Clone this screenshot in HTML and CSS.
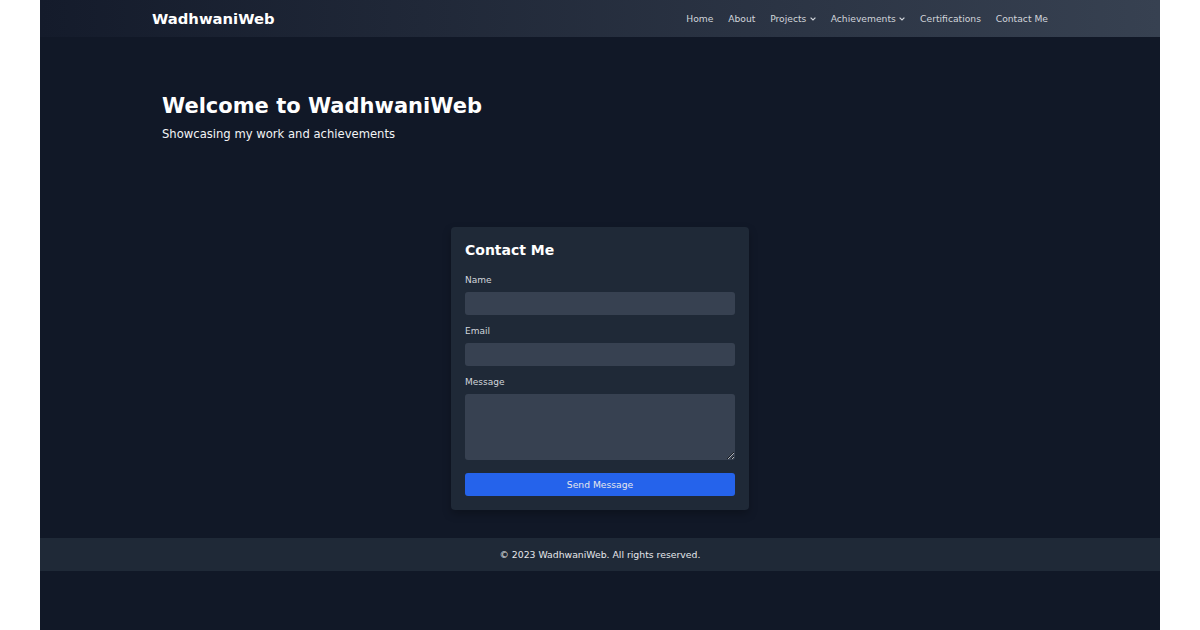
FILE: index.html
```html
<!DOCTYPE html>
<html lang="en">
<head>
<meta charset="utf-8">
<title>WadhwaniWeb</title>
<link rel="stylesheet" href="styles.css">
</head>
<body>
<header class="site-header">
  <div class="header-inner">
    <a class="logo" href="#">WadhwaniWeb</a>
    <nav class="nav">
      <a href="#">Home</a>
      <a href="#">About</a>
      <a href="#" class="dd">Projects<svg class="chev" viewBox="0 0 6 4" width="6" height="4"><path d="M0.6 0.6 L3 3 L5.4 0.6" fill="none" stroke="currentColor" stroke-width="1.2"/></svg></a>
      <a href="#" class="dd">Achievements<svg class="chev" viewBox="0 0 6 4" width="6" height="4"><path d="M0.6 0.6 L3 3 L5.4 0.6" fill="none" stroke="currentColor" stroke-width="1.2"/></svg></a>
      <a href="#">Certifications</a>
      <a href="#">Contact Me</a>
    </nav>
  </div>
</header>
<main class="main">
  <section class="hero">
    <h1>Welcome to WadhwaniWeb</h1>
    <p>Showcasing my work and achievements</p>
  </section>
  <section class="contact">
    <form class="card">
      <h2>Contact Me</h2>
      <div class="field">
        <label>Name</label>
        <input type="text">
      </div>
      <div class="field">
        <label>Email</label>
        <input type="email">
      </div>
      <div class="field field-last">
        <label>Message</label>
        <textarea></textarea>
      </div>
      <button type="button" class="btn">Send Message</button>
    </form>
  </section>
</main>
<footer class="footer">© 2023 WadhwaniWeb. All rights reserved.</footer>
</body>
</html>
```
FILE: styles.css
```css
html {
  background: #ffffff;
}
body {
  margin: 0 auto;
  width: 1120px;
  min-height: 630px;
  background: #111827;
  font-family: "DejaVu Sans", sans-serif;
  color: #ffffff;
}
.site-header {
  height: 37px;
  background: linear-gradient(to right, #141b2b, #374151);
}
.header-inner {
  width: 896px;
  height: 100%;
  margin: 0 auto;
  display: flex;
  align-items: center;
  justify-content: space-between;
}
.logo {
  color: #ffffff;
  text-decoration: none;
  font-weight: bold;
  font-size: 14.8px;
}
.nav {
  display: flex;
  align-items: center;
  gap: 14.8px;
}
.nav a {
  color: #d1d5db;
  text-decoration: none;
  font-size: 9.2px;
  display: flex;
  align-items: center;
}
.chev {
  margin-left: 3.5px;
}
.main {
  padding-top: 55.5px;
}
.hero {
  width: 896px;
  margin: 0 auto;
  padding: 0 10px;
  box-sizing: border-box;
}
.hero h1 {
  margin: 0;
  font-size: 21px;
  line-height: 27.3px;
  font-weight: bold;
}
.hero p {
  margin: 6.4px 0 0;
  font-size: 11.6px;
  line-height: 17.4px;
  color: #f3f4f6;
}
.contact {
  padding: 83px 0 28px;
}
.card {
  width: 298px;
  margin: 0 auto;
  box-sizing: border-box;
  padding: 14px;
  background: #1f2937;
  border-radius: 4px;
  box-shadow: 0 4px 8px rgba(0, 0, 0, 0.25);
}
.card h2 {
  margin: -1px 0 13.2px;
  font-size: 14px;
  line-height: 21px;
  font-weight: bold;
}
.field {
  margin-bottom: 10.3px;
}
.field-last {
  margin-bottom: 13px;
}
.field label {
  display: block;
  font-size: 9px;
  line-height: 13.5px;
  color: #d1d5db;
  margin-bottom: 4.5px;
}
.field input,
.field textarea {
  display: block;
  width: 100%;
  box-sizing: border-box;
  height: 23px;
  border: none;
  border-radius: 3px;
  background: #374151;
  color: #ffffff;
  font-family: inherit;
  font-size: 9px;
  padding: 0 6px;
  outline: none;
}
.field textarea {
  height: 66px;
  resize: vertical;
  padding: 5px 6px;
}
.btn {
  display: block;
  width: 100%;
  height: 23px;
  border: none;
  border-radius: 3px;
  background: #2563eb;
  color: #e5e7eb;
  font-family: inherit;
  font-size: 9.2px;
  cursor: pointer;
}
.footer {
  height: 33px;
  background: #1f2937;
  display: flex;
  align-items: center;
  justify-content: center;
  font-size: 9.3px;
  color: #e5e7eb;
}
```
